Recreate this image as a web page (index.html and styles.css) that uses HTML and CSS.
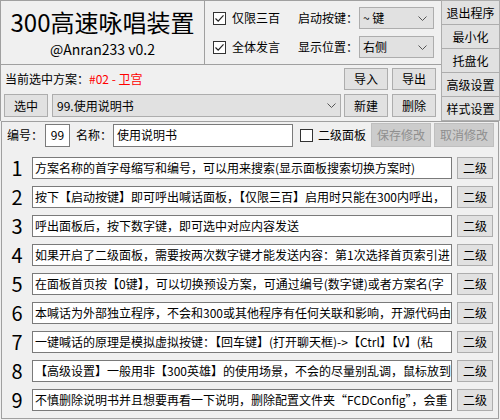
FILE: index.html
```html
<!DOCTYPE html>
<html lang="zh-CN">
<head>
<meta charset="utf-8">
<title>300高速咏唱装置</title>
<link rel="stylesheet" href="styles.css">
</head>
<body>
<div class="top">
  <div class="main">
    <div class="hdr">
      <div class="brand">
        <div class="title">300高速咏唱装置</div>
        <div class="sub">@Anran233 v0.2</div>
      </div>
      <div class="opts">
        <div class="opt-row">
          <div class="chk"><span class="box"><svg width="11" height="11" viewBox="0 0 11 11"><path d="M1.5 5.5 L4.2 8.2 L9.5 2.3" fill="none" stroke="#222" stroke-width="1.2"/></svg></span><span>仅限三百</span></div>
          <span class="lbl">启动按键：</span>
          <div class="combo small"><span>~ 键</span><svg class="chev" width="9" height="5" viewBox="0 0 9 5"><polyline points="0.5,0.5 4.5,4.5 8.5,0.5" fill="none" stroke="#555" stroke-width="1"/></svg></div>
        </div>
        <div class="opt-row">
          <div class="chk"><span class="box"><svg width="11" height="11" viewBox="0 0 11 11"><path d="M1.5 5.5 L4.2 8.2 L9.5 2.3" fill="none" stroke="#222" stroke-width="1.2"/></svg></span><span>全体发言</span></div>
          <span class="lbl">显示位置：</span>
          <div class="combo small"><span>右侧</span><svg class="chev" width="9" height="5" viewBox="0 0 9 5"><polyline points="0.5,0.5 4.5,4.5 8.5,0.5" fill="none" stroke="#555" stroke-width="1"/></svg></div>
        </div>
      </div>
    </div>
    <div class="cur-row">
      <span class="cur-text">当前选中方案：<span class="red">#02 - 卫宫</span></span>
      <div class="btn b44">导入</div>
      <div class="btn b44 g4">导出</div>
    </div>
    <div class="pick-row">
      <div class="btn b44">选中</div>
      <div class="combo wide"><span>99.使用说明书</span><svg class="chev" width="9" height="5" viewBox="0 0 9 5"><polyline points="0.5,0.5 4.5,4.5 8.5,0.5" fill="none" stroke="#555" stroke-width="1"/></svg></div>
      <div class="btn b44 g3">新建</div>
      <div class="btn b44 g4">删除</div>
    </div>
  </div>
  <div class="side">
    <div class="sbtn">退出程序</div>
    <div class="sbtn">最小化</div>
    <div class="sbtn">托盘化</div>
    <div class="sbtn">高级设置</div>
    <div class="sbtn">样式设置</div>
  </div>
</div>
<div class="panel">
  <div class="edit-row">
    <span class="key">编号：</span>
    <div class="inp num-in">99</div>
    <span class="key k2">名称：</span>
    <div class="inp name-in">使用说明书</div>
    <span class="box empty"></span>
    <span class="chk-lbl">二级面板</span>
    <div class="btn dis save">保存修改</div>
    <div class="btn dis cancel">取消修改</div>
  </div>
  <div class="lines">
    <div class="line"><span class="num">1</span><div class="field">方案名称的首字母缩写和编号，可以用来搜索(显示面板搜索切换方案时)</div><div class="btn lvl">二级</div></div>
    <div class="line"><span class="num">2</span><div class="field">按下【启动按键】即可呼出喊话面板，【仅限三百】启用时只能在300内呼出，</div><div class="btn lvl">二级</div></div>
    <div class="line"><span class="num">3</span><div class="field">呼出面板后，按下数字键，即可选中对应内容发送</div><div class="btn lvl">二级</div></div>
    <div class="line"><span class="num">4</span><div class="field">如果开启了二级面板，需要按两次数字键才能发送内容：第1次选择首页索引进</div><div class="btn lvl">二级</div></div>
    <div class="line"><span class="num">5</span><div class="field">在面板首页按【0键】，可以切换预设方案，可通过编号(数字键)或者方案名(字</div><div class="btn lvl">二级</div></div>
    <div class="line"><span class="num">6</span><div class="field">本喊话为外部独立程序，不会和300或其他程序有任何关联和影响，开源代码由</div><div class="btn lvl">二级</div></div>
    <div class="line"><span class="num">7</span><div class="field">一键喊话的原理是模拟虚拟按键：【回车键】(打开聊天框)-&gt;【Ctrl】【V】(粘</div><div class="btn lvl">二级</div></div>
    <div class="line"><span class="num">8</span><div class="field">【高级设置】一般用非【300英雄】的使用场景，不会的尽量别乱调，鼠标放到</div><div class="btn lvl">二级</div></div>
    <div class="line"><span class="num">9</span><div class="field">不慎删除说明书并且想要再看一下说明，删除配置文件夹“FCDConfig”，会重</div><div class="btn lvl">二级</div></div>
  </div>
</div>
</body>
</html>
```
FILE: styles.css
```css
* { box-sizing: border-box; }
html, body { margin: 0; padding: 0; }
body {
  width: 500px;
  height: 420px;
  overflow: hidden;
  background: #f0f0f0;
  font-family: "Noto Sans CJK SC", "Microsoft YaHei", sans-serif;
  font-size: 12px;
  line-height: 16px;
  color: #000;
}

.top { display: flex; height: 121px; }
.main {
  width: 441px;
  border-top: 1px solid #a0a0a0;
  border-left: 1px solid #a0a0a0;
}
.hdr {
  display: flex;
  height: 64px;
  border-bottom: 1px solid #a0a0a0;
}
.brand {
  width: 204px;
  border-right: 1px solid #a0a0a0;
  padding-top: 4px;
  text-align: center;
}
.title { font-size: 24px; line-height: 34px; }
.sub { font-size: 14px; line-height: 20px; }

.opts {
  flex: 1;
  padding: 6px 0 0 8px;
  display: flex;
  flex-direction: column;
  gap: 7px;
}
.opt-row { display: flex; align-items: center; height: 22px; }
.chk { display: flex; align-items: center; gap: 6px; width: 85px; }
.box {
  width: 13px;
  height: 13px;
  border: 1px solid #333;
  background: #fff;
  display: flex;
  align-items: center;
  justify-content: center;
  flex: none;
}
.lbl { width: 61px; }

.combo {
  display: flex;
  align-items: center;
  justify-content: space-between;
  height: 22px;
  border: 1px solid #adadad;
  background: #e1e1e1;
  padding: 0 6px 0 3px;
}
.combo.small { width: 75px; }
.combo.wide { width: 289px; margin-left: 4px; padding: 0 4px 0 4px; }
.chev { flex: none; }

.btn {
  display: flex;
  align-items: center;
  justify-content: center;
  height: 22px;
  border: 1px solid #adadad;
  background: #e1e1e1;
  white-space: nowrap;
}
.b44 { width: 44px; }
.g3 { margin-left: 3px; }
.g4 { margin-left: 4px; }

.cur-row {
  display: flex;
  align-items: center;
  height: 22px;
  margin-top: 3px;
  padding: 0 5px 0 4px;
}
.cur-text { flex: 1; }
.red { color: #ff0000; }

.pick-row {
  display: flex;
  align-items: center;
  height: 23px;
  margin-top: 4px;
  padding: 0 5px 0 3px;
}
.pick-row .btn, .pick-row .combo { height: 23px; }

.side { width: 59px; display: flex; flex-direction: column; }
.sbtn {
  height: 24px;
  border: 1px solid #adadad;
  border-top: none;
  background: #e1e1e1;
  display: flex;
  align-items: center;
  justify-content: center;
  white-space: nowrap;
}
.sbtn:first-child { height: 25px; border-top: 1px solid #adadad; }

.panel {
  margin-left: 1px;
  width: 498px;
  height: 298px;
  border: 1px solid #a0a0a0;
  padding: 1px 4px 0 5px;
}
.edit-row { display: flex; align-items: center; height: 24px; }
.key { margin-right: 2px; }
.k2 { margin-left: 6px; margin-right: 1px; }
.inp {
  height: 23px;
  border: 1px solid #7a7a7a;
  background: #fff;
  display: flex;
  align-items: center;
  padding: 0 3px;
  white-space: nowrap;
}
.num-in { width: 25px; justify-content: center; padding: 0; }
.name-in { width: 180px; }
.box.empty { margin-left: 7px; }
.chk-lbl { margin-left: 5px; }
.dis {
  background: #cccccc;
  border-color: #bfbfbf;
  color: #8f8f8f;
  height: 24px;
  width: 60px;
}
.save { margin-left: auto; }
.cancel { margin-left: 3px; }

.lines { margin: 10px 0 0 -5px; }
.line { display: flex; align-items: center; height: 22px; margin-bottom: 7px; }
.num { width: 30px; text-align: center; font-size: 20px; line-height: 22px; }
.field {
  width: 420px;
  height: 22px;
  border: 1px solid #7a7a7a;
  background: #fff;
  padding: 0 2px;
  line-height: 20px;
  white-space: nowrap;
  overflow: hidden;
}
.lvl { width: 36px; margin-left: 5px; }
```
